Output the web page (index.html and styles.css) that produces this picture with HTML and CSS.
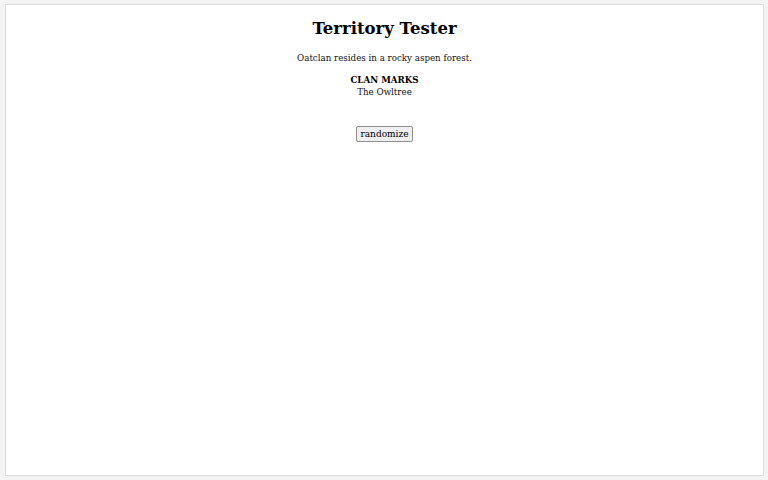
FILE: index.html
```html
<!DOCTYPE html>
<html lang="en">
<head>
    <meta charset="UTF-8">
    <title>Territory Tester</title>
    <link rel="stylesheet" href="styles.css">
</head>
<body>
    <div class="page">
        <h1>Territory Tester</h1>
        <p class="result" id="result">Oatclan resides in a rocky aspen forest.</p>

        <div class="marks">
            <div class="marks-label">CLAN MARKS</div>
            <div class="marks-value" id="marks">The Owltree</div>
        </div>

        <button class="randomize-btn">randomize</button>
    </div>
</body>
</html>
```

FILE: styles.css
```css
* {
    margin: 0;
    padding: 0;
    box-sizing: border-box;
}

html, body {
    height: 100%;
}

body {
    background: #f3f3f3;
    padding: 4px 4px 4px 5px;
    font-family: 'DejaVu Serif', serif;
    color: #111;
}

.page {
    height: 100%;
    background: #fff;
    border: 1px solid #dcdcdc;
    text-align: center;
    padding-top: 14px;
}

h1 {
    font-size: 16.5px;
    font-weight: bold;
    color: #000;
    line-height: 20px;
    margin-bottom: 13px;
}

.result {
    font-size: 8.7px;
    line-height: 12px;
    margin-bottom: 10px;
}

.marks {
    font-size: 8.7px;
    line-height: 12px;
    margin-bottom: 24px;
}

.marks-label {
    font-weight: bold;
    color: #000;
}

.randomize-btn {
    font-family: 'DejaVu Serif', serif;
    font-size: 9px;
    line-height: 12px;
    padding: 1px 3px;
    color: #000;
    background: #efefef;
    border: 1px solid #8f8f8f;
    border-radius: 2px;
}
```
